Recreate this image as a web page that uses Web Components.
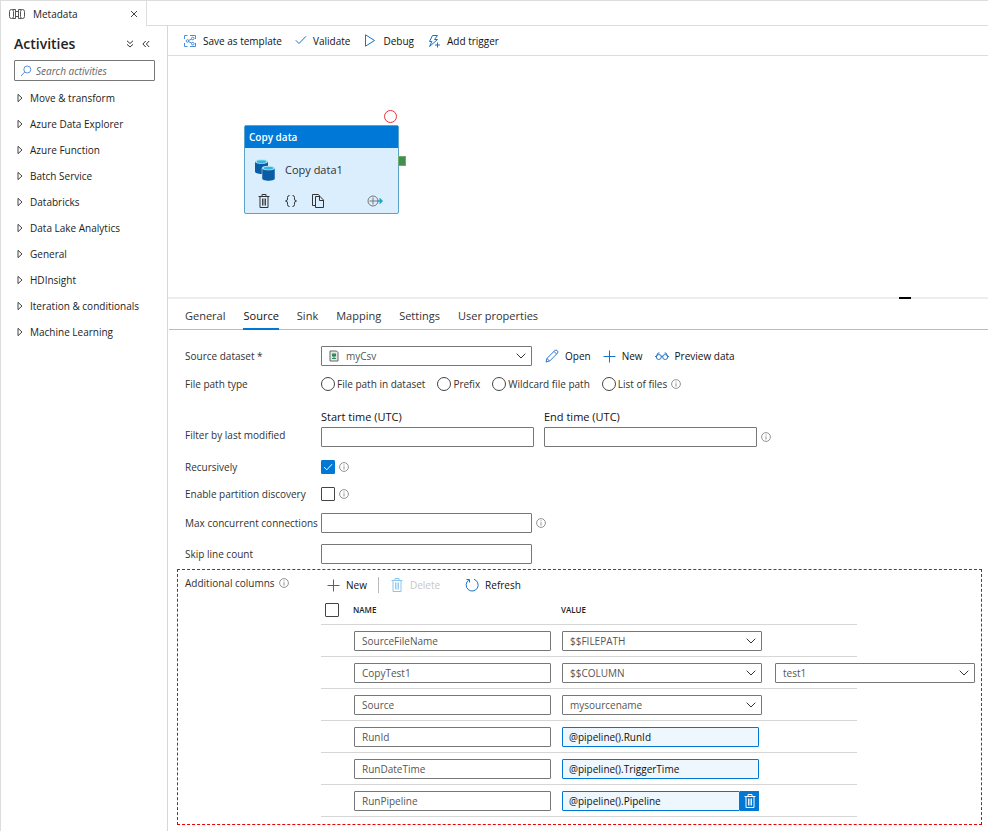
<!DOCTYPE html>
<html lang="en">
<head>
<meta charset="utf-8">
<title>Metadata</title>
<style>
  body {
    margin: 0;
    background: #fff;
    color: #323130;
    font: 10px/16px "Open Sans", "Noto Sans", sans-serif;
  }
</style>
</head>
<body>
<pipeline-studio>
  <editor-tab slot="tabs">Metadata</editor-tab>

  <activity-list slot="sidebar" heading="Activities">
    <activity-group>Move &amp; transform</activity-group>
    <activity-group>Azure Data Explorer</activity-group>
    <activity-group>Azure Function</activity-group>
    <activity-group>Batch Service</activity-group>
    <activity-group>Databricks</activity-group>
    <activity-group>Data Lake Analytics</activity-group>
    <activity-group>General</activity-group>
    <activity-group>HDInsight</activity-group>
    <activity-group>Iteration &amp; conditionals</activity-group>
    <activity-group>Machine Learning</activity-group>
  </activity-list>

  <command-bar>
    <tool-button icon="template">Save as template</tool-button>
    <tool-button icon="check">Validate</tool-button>
    <tool-button icon="play">Debug</tool-button>
    <tool-button icon="trigger">Add trigger</tool-button>
  </command-bar>
  <pipeline-canvas>
    <activity-node type="Copy data">Copy data1</activity-node>
  </pipeline-canvas>
  <panel-splitter></panel-splitter>
  <property-tabs></property-tabs>
  <source-form></source-form>
</pipeline-studio>

<script>
const ICONS = {
  pipeline: ['0 0 16 12', `<g fill="none" stroke="#555"><rect x=".5" y="1.5" width="4" height="9" rx="2"/><path d="M3.500 1.500h3v9h-3M9.500 1.500h3M9.500 10.500h3M9.500 1.500v9M6.500 3.500h3M6.500 8.500h3"/><rect x="11.500" y="1.500" width="4" height="9" rx="2"/></g>`],
  close: ['0 0 8 8', '<path d="M1 1l6 6M7 1L1 7" fill="none" stroke="#444"/>'],
  collapseAll: ['0 0 8 8', '<path d="M1 .8l3 2.700 3-2.700M1 4.300L4 7l3-2.700" fill="none" stroke="#333"/>'],
  hide: ['0 0 8 8', '<path d="M3.700 1L.9 4l2.800 3M7.200 1L4.400 4l2.800 3" fill="none" stroke="#333"/>'],
  search: ['0 0 12 12', '<g fill="none" stroke="#5b8fd6"><circle cx="7.300" cy="4.500" r="3.500"/><path d="M4.800 7L1 11"/></g>'],
  expand: ['0 0 6 10', '<path d="M1 1.300v7.400L5 5z" fill="none" stroke="#444"/>'],
  template: ['0 0 14 14', `<g fill="none" stroke="#4a8fdc"><path d="M1.500 5V1.500h3M1.500 9v3.500h3M7 1.500h5.500v3.500M12.500 9v3.500H7"/><circle cx="4.500" cy="7" r="1.300"/><circle cx="9.800" cy="4.500" r="1.300"/><circle cx="9.800" cy="9.700" r="1.300"/><path d="M5.700 6.400l3-1.400M5.700 7.600l3 1.500"/></g>`],
  check: ['0 0 12 12', '<path d="M.8 5.300l3.200 3.200 7-7.200" fill="none" stroke="#1473d0"/>'],
  play: ['0 0 14 14', '<path d="M2.500 .8v11.400L11.500 6.500z" fill="none" stroke="#1473d0"/>'],
  trigger: ['0 0 14 14', '<path d="M5.500 1.500h5L7.500 5.500h3L2.500 12.500l2.300-5H2.500zM10.500 8.500v5M8 11h5" fill="none" stroke="#1473d0"/>'],
  trash: ['0 0 14 16', '<g fill="none" stroke="currentColor"><path d="M1.500 3.500h11M5 3V1.500h4V3M3 3.500v11h8v-11"/><path d="M5.500 5.500v7M7 5.500v7M8.500 5.500v7" stroke-width=".9"/></g>'],
  braces: ['0 0 14 14', '<path d="M5.500 1.500Q3.500 1.500 3.500 3.500V5Q3.500 7 1.500 7 3.500 7 3.500 9v1.500q0 2 2 2M8.500 1.500q2 0 2 2V5q0 2 2 2-2 0-2 2v1.500q0 2-2 2" fill="none" stroke="#333"/>'],
  copy: ['0 0 14 16', '<g fill="none" stroke="#333"><path d="M4 12.500H1.500v-11h6L9 3.500"/><path d="M4.500 3.500h4.500l3.500 3.500v7.500h-8zM8.500 3.500V7.500h4"/></g>'],
  addOutput: ['0 0 18 12', '<g fill="none" stroke="#777"><circle cx="6" cy="6" r="5"/><path d="M6 2.500v7M2.500 6H10"/></g><path d="M10 6h5M12.500 3.500L15 6l-2.500 2.500" fill="none" stroke="#16a3cf" stroke-width="1.400"/>'],
  copyData: ['0 0 22 24', `<path d="M1 3.500v10C1 15 4 16 7.500 16S14 15 14 13.500v-10z" fill="#0b5ba5"/><ellipse cx="7.500" cy="3.500" rx="6.500" ry="2.300" fill="#b9e3f5"/><ellipse cx="7.500" cy="3.700" rx="4.800" ry="1.400" fill="#35b8dc"/><path d="M8 10v10.500c0 1.500 3 2.500 6.500 2.500S21 22 21 20.500V10z" fill="#0b5ba5" stroke="#dbeefe" stroke-width=".5"/><ellipse cx="14.500" cy="10" rx="6.500" ry="2.300" fill="#b9e3f5"/><ellipse cx="14.500" cy="10.200" rx="4.800" ry="1.400" fill="#35b8dc"/>`],
  dataset: ['0 0 10 12', '<path d="M1 1h6.500L9 2.500V11H1z" fill="#e3e9e6" stroke="#666"/><path d="M3 3.500h4v3H3z" fill="#2d8a5c"/><path d="M5 4v5M3 8.500h4" stroke="#2d8a5c"/>'],
  chevron: ['0 0 10 6', '<path d="M.7.7L5 5 9.300.7" fill="none" stroke="#333"/>'],
  pencil: ['0 0 14 14', '<path d="M1 13l1-3.700L10 1.400q1.200-.8 2.300.3t.3 2.300L4.700 12zM2 9.500L4.500 12M9 2.500L11.500 5" fill="none" stroke="#2b78d0"/>'],
  plus: ['0 0 13 13', '<path d="M6.500 .5v12M.5 6.500h12" fill="none" stroke="#1473d0"/>'],
  glasses: ['0 0 14 10', '<g fill="none" stroke="#2b78d0"><circle cx="3.800" cy="6" r="2.500"/><circle cx="10.200" cy="6" r="2.500"/><path d="M6 5.500q1-.8 2 0M1.300 5.500L3 2h1.500M12.700 5.500L11 2H9.500M0 5.500h1.500M12.500 5.500H14"/></g>'],
  info: ['0 0 10 10', '<g fill="none" stroke="#777" stroke-width=".8"><circle cx="5" cy="5" r="4.400"/><path d="M5 4.300v3.200M5 2.400v1"/></g>'],
  refresh: ['0 0 14 14', '<path d="M9 1.300a6 6 0 1 1-5.300.8M1.500 1.500h3v3" fill="none" stroke="#1473d0"/>'],
};

// small helper: every element here is a shadow root filled from one markup string
function define(name, render, setup) {
  customElements.define(name, class extends HTMLElement {
    connectedCallback() {
      if (this.shadowRoot) return;
      this.attachShadow({ mode: 'open' });
      this.shadowRoot.innerHTML = render(this);
      if (setup) setup(this, this.shadowRoot);
    }
  });
}

define('ui-icon', (el) => {
  const [box, body] = ICONS[el.getAttribute('name')];
  const [, , w, h] = box.split(' ');
  return `
    <style>
      :host { display: inline-flex; flex: none; }
      svg { display: block; }
    </style>
    <svg viewBox="${box}" width="${w}" height="${h}" aria-hidden="true">${body}</svg>`;
});

define('pipeline-studio', () => `
  <style>
    :host {
      display: flex;
      flex-direction: column;
      min-height: 100vh;
      box-sizing: border-box;
      border-top: 1px solid #ddd;
      border-left: 1px solid #ddd;
    }
    header { display: flex; }
    .rest { flex: 1; border-bottom: 1px solid #ddd; }
    .body { display: flex; flex: 1; }
    aside { width: 166px; flex: none; border-right: 1px solid #d6d6d6; }
    main { flex: 1; min-width: 0; display: flex; flex-direction: column; }
  </style>
  <header><slot name="tabs"></slot><div class="rest"></div></header>
  <div class="body">
    <aside><slot name="sidebar"></slot></aside>
    <main><slot></slot></main>
  </div>`);

define('editor-tab', () => `
  <style>
    :host {
      display: flex;
      align-items: center;
      box-sizing: border-box;
      width: 146px;
      height: 25px;
      padding: 0 8px;
      border-right: 1px solid #ddd;
      color: #222;
    }
    span { flex: 1; padding-left: 8px; }
    button { display: flex; padding: 0; border: 0; background: none; }
  </style>
  <ui-icon name="pipeline"></ui-icon>
  <span><slot></slot></span>
  <button aria-label="Close tab"><ui-icon name="close"></ui-icon></button>`);

define('activity-list', (el) => `
  <style>
    :host { display: block; padding: 8px 12px 0 13px; }
    header { display: flex; align-items: center; gap: 8px; height: 20px; }
    h2 { flex: 1; margin: 0; font-size: 14px; font-weight: 600; color: #222; }
    button { display: flex; padding: 0; border: 0; background: none; }
    header button:last-child { margin-right: 5px; }
    .search {
      display: flex;
      align-items: center;
      gap: 4px;
      height: 19px;
      margin: 6px 0 4px;
      padding: 0 5px;
      border: 1px solid #777;
      border-radius: 1px;
    }
    input {
      flex: 1;
      min-width: 0;
      padding: 0;
      border: 0;
      outline: 0;
      font: italic 10px/16px "Open Sans", "Noto Sans", sans-serif;
    }
    input::placeholder { color: #666; }
  </style>
  <header>
    <h2>${el.getAttribute('heading')}</h2>
    <button aria-label="Collapse all"><ui-icon name="collapseAll"></ui-icon></button>
    <button aria-label="Hide activities"><ui-icon name="hide"></ui-icon></button>
  </header>
  <div class="search">
    <ui-icon name="search"></ui-icon>
    <input type="search" placeholder="Search activities" aria-label="Search activities">
  </div>
  <slot></slot>`);

define('activity-group', () => `
  <style>
    :host { display: block; }
    button {
      display: flex;
      align-items: center;
      gap: 7px;
      width: 100%;
      height: 26px;
      padding: 0 0 0 3px;
      border: 0;
      background: none;
      color: #222;
      font: inherit;
      white-space: nowrap;
    }
  </style>
  <button><ui-icon name="expand"></ui-icon><span><slot></slot></span></button>`);

define('command-bar', () => `
  <style>
    :host {
      display: flex;
      align-items: center;
      gap: 13px;
      height: 29px;
      padding-left: 15px;
      border-bottom: 1px solid #ddd;
    }
  </style>
  <slot></slot>`);

define('tool-button', (el) => `
  <style>
    :host { display: inline-flex; }
    button {
      display: flex;
      align-items: center;
      gap: 6px;
      padding: 0;
      border: 0;
      background: none;
      color: #111;
      font: inherit;
      white-space: nowrap;
    }
    button:disabled { color: #c8c6c4; }
    button:disabled ui-icon { color: #8cc4ee; }
  </style>
  <button${el.hasAttribute('disabled') ? ' disabled' : ''}>
    <ui-icon name="${el.getAttribute('icon')}"></ui-icon><span><slot></slot></span>
  </button>`);

define('pipeline-canvas', () => `
  <style>
    :host { display: block; position: relative; height: 241px; }
    ::slotted(activity-node) { position: absolute; left: 76px; top: 69px; }
  </style>
  <slot></slot>`);

define('activity-node', (el) => `
  <style>
    :host {
      box-sizing: border-box;
      width: 155px;
      height: 89px;
      border: 1px solid #5ba3c9;
      border-radius: 2px;
      background: #dbeefe;
    }
    .type {
      height: 22px;
      padding-left: 4px;
      background: #0078d7;
      color: #fff;
      font-weight: 600;
      line-height: 22px;
    }
    .name {
      display: flex;
      align-items: center;
      gap: 9px;
      height: 44px;
      padding-left: 9px;
      font-size: 11px;
    }
    .tools { display: flex; align-items: center; gap: 13px; padding: 1px 13px 0 12px; color: #333; }
    button { display: flex; padding: 0; border: 0; background: none; color: inherit; }
    button:last-child { margin-left: auto; }
    .status {
      position: absolute;
      left: 139px;
      top: -16px;
      width: 11px;
      height: 11px;
      border: 1px solid #e8303c;
      border-radius: 50%;
    }
    .port {
      position: absolute;
      right: -8px;
      top: 30px;
      box-sizing: border-box;
      width: 8px;
      height: 10px;
      border: 1px solid #6cab70;
      background: #448e4c;
    }
  </style>
  <div class="type">${el.getAttribute('type')}</div>
  <div class="name"><ui-icon name="copyData"></ui-icon><slot></slot></div>
  <div class="tools">
    <button aria-label="Delete"><ui-icon name="trash"></ui-icon></button>
    <button aria-label="Code"><ui-icon name="braces"></ui-icon></button>
    <button aria-label="Clone"><ui-icon name="copy"></ui-icon></button>
    <button aria-label="Add output"><ui-icon name="addOutput"></ui-icon></button>
  </div>
  <div class="status"></div>
  <div class="port"></div>`);

define('panel-splitter', () => `
  <style>
    :host { display: flex; justify-content: flex-end; height: 2px; background: #ededed; }
    div { width: 12px; margin-right: 77px; background: #000; }
  </style>
  <div></div>`);

define('property-tabs', () => `
  <style>
    :host { display: block; padding-left: 1px; }
    nav {
      display: flex;
      gap: 18px;
      height: 30px;
      padding-left: 16px;
      border-bottom: 1px solid #bbb;
    }
    button {
      height: 31px;
      padding: 5px 0 0;
      border: 0;
      border-bottom: 2px solid transparent;
      background: none;
      color: #333;
      font: 11px/16px "Open Sans", "Noto Sans", sans-serif;
    }
    button[aria-selected=true] { border-color: #0078d4; color: #111; }
  </style>
  <nav role="tablist">
    <button role="tab">General</button>
    <button role="tab" aria-selected="true">Source</button>
    <button role="tab">Sink</button>
    <button role="tab">Mapping</button>
    <button role="tab">Settings</button>
    <button role="tab">User properties</button>
  </nav>`, (el, root) => {
  const tabs = root.querySelectorAll('button');
  tabs.forEach((tab) => tab.addEventListener('click', () => {
    tabs.forEach((t) => t.setAttribute('aria-selected', t === tab));
  }));
});

define('form-row', () => `
  <style>
    :host {
      display: grid;
      grid-template-columns: 136px 1fr;
      align-items: center;
      height: 28px;
      padding-left: 8px;
      white-space: nowrap;
    }
    :host([size=compact]) { height: 26px; }
    :host([size=wide]) { height: 31px; }
    :host([size=tall]) { height: 49px; align-items: end; padding-bottom: 6px; }
    :host([size=tall]) ::slotted([slot=label]) { padding-bottom: 4px; }
    .controls { display: flex; align-items: center; gap: 4px; }
  </style>
  <slot name="label"></slot>
  <div class="controls"><slot></slot></div>`);

const COLUMNS = [
  { name: 'SourceFileName', select: ['$$FILEPATH'] },
  { name: 'CopyTest1', select: ['$$COLUMN', 'test1'] },
  { name: 'Source', select: ['mysourcename'] },
  { name: 'RunId', expression: '@pipeline().RunId' },
  { name: 'RunDateTime', expression: '@pipeline().TriggerTime' },
  { name: 'RunPipeline', expression: '@pipeline().Pipeline', removable: true },
];

const selectBox = (value, label) => `
  <div class="select">
    <select aria-label="${label}"><option>${value}</option></select>
    <ui-icon name="chevron"></ui-icon>
  </div>`;

const columnRow = (col) => `
  <tr>
    <td></td>
    <td><input type="text" value="${col.name}" aria-label="Name"></td>
    <td><div class="value">${col.select
      ? col.select.map((v) => selectBox(v, 'Value')).join('')
      : `<div class="expression">
           <input type="text" value="${col.expression}" aria-label="Value">
           ${col.removable ? '<button aria-label="Remove"><ui-icon name="trash"></ui-icon></button>' : ''}
         </div>`}</div></td>
  </tr>`;

define('source-form', () => `
  <style>
    :host { display: block; padding: 12px 6px 6px 9px; }
    input[type=text], select {
      box-sizing: border-box;
      height: 20px;
      margin: 0;
      padding: 0 7px;
      border: 1px solid #777;
      border-radius: 1px;
      outline: 0;
      background: #fff;
      color: #555;
      font: inherit;
      appearance: none;
    }
    input.field { width: 211px; }
    input[type=checkbox], input[type=radio] {
      flex: none;
      box-sizing: border-box;
      width: 14px;
      height: 14px;
      margin: 0;
      border: 1px solid #444;
      border-radius: 1px;
      background: #fff;
      vertical-align: middle;
      appearance: none;
    }
    input[type=radio] { border-radius: 50%; }
    .check { display: grid; place-items: center; }
    .check > *, .select > * { grid-area: 1 / 1; }
    .check input:checked { border-color: #0078d4; background: #0078d4; }
    .check svg { display: none; pointer-events: none; }
    .check input:checked + svg { display: block; }
    .select { display: grid; align-items: center; width: 200px; flex: none; }
    .select select { width: 100%; }
    .select ui-icon { justify-self: end; margin-right: 6px; pointer-events: none; }
    .dataset { width: 211px; margin-right: 9px; }
    .dataset select { padding-left: 24px; }
    .dataset ui-icon:last-child { justify-self: start; margin-left: 8px; }
    .commands { display: flex; gap: 12px; }
    .option { display: flex; align-items: center; gap: 2px; margin-right: 8px; }
    .option:last-of-type { margin: 0; }
    .time { display: grid; gap: 2px; width: 213px; margin-right: 6px; color: #111; font-size: 11px; }
    .time:last-of-type { margin: 0; }
    .time + ui-icon { align-self: end; margin-bottom: 5px; }
    section {
      display: grid;
      grid-template-columns: 136px 1fr;
      padding: 5px 0 7px 7px;
      border: 1px dashed #e00;
    }
    h3 { display: flex; gap: 4px; margin: 0; font: inherit; }
    h3 ui-icon { height: 16px; align-items: center; }
    .bar { display: flex; align-items: center; gap: 11px; height: 20px; padding-left: 6px; }
    .bar hr { width: 1px; height: 16px; margin: 0; border: 0; background: #bbb; }
    .bar tool-button:last-child { margin-left: 14px; }
    table { width: 536px; table-layout: fixed; border-collapse: collapse; }
    th, td { height: 31px; padding: 0; border-bottom: 1px solid #d6d6d6; text-align: left; }
    thead th { height: 29px; color: #222; font-size: 8px; font-weight: 600; }
    th:first-child { width: 32px; padding-left: 4px; box-sizing: border-box; }
    th:nth-child(2) { width: 208px; }
    td input[type=text] { width: 197px; margin-left: 1px; }
    tbody tr td:first-child { width: 32px; }
    .value { display: flex; gap: 13px; padding-left: 1px; }
    .expression { display: flex; width: 197px; flex: none; }
    .value .expression input { flex: 1; min-width: 0; margin: 0; padding: 0 6px; border-color: #0078d4; background: #eef6fe; color: #111; }
    .expression button {
      display: flex;
      align-items: center;
      justify-content: center;
      width: 19px;
      height: 20px;
      padding: 0;
      border: 0;
      background: #0078d4;
      color: #fff;
    }
  </style>

  <form-row>
    <label slot="label" for="dataset">Source dataset *</label>
    <div class="select dataset">
      <select id="dataset"><option>myCsv</option></select>
      <ui-icon name="chevron"></ui-icon>
      <ui-icon name="dataset"></ui-icon>
    </div>
    <div class="commands">
      <tool-button icon="pencil">Open</tool-button>
      <tool-button icon="plus">New</tool-button>
      <tool-button icon="glasses">Preview data</tool-button>
    </div>
  </form-row>

  <form-row role="radiogroup" aria-label="File path type">
    <span slot="label">File path type</span>
    <label class="option"><input type="radio" name="path">File path in dataset</label>
    <label class="option"><input type="radio" name="path">Prefix</label>
    <label class="option"><input type="radio" name="path">Wildcard file path</label>
    <label class="option"><input type="radio" name="path">List of files</label>
    <ui-icon name="info"></ui-icon>
  </form-row>

  <form-row size="tall">
    <span slot="label">Filter by last modified</span>
    <label class="time">Start time (UTC)<input type="text"></label>
    <label class="time">End time (UTC)<input type="text"></label>
    <ui-icon name="info"></ui-icon>
  </form-row>

  <form-row>
    <label slot="label" for="recursive">Recursively</label>
    <div class="check">
      <input type="checkbox" id="recursive" checked>
      <svg width="10" height="10" viewBox="0 0 10 10"><path d="M1 5l2.800 2.800L9 2.200" fill="none" stroke="#fff"/></svg>
    </div>
    <ui-icon name="info"></ui-icon>
  </form-row>

  <form-row size="compact">
    <label slot="label" for="partition">Enable partition discovery</label>
    <input type="checkbox" id="partition">
    <ui-icon name="info"></ui-icon>
  </form-row>

  <form-row size="wide">
    <label slot="label" for="connections">Max concurrent connections</label>
    <input class="field" type="text" id="connections">
    <ui-icon name="info"></ui-icon>
  </form-row>

  <form-row size="wide">
    <label slot="label" for="skip">Skip line count</label>
    <input class="field" type="text" id="skip">
  </form-row>

  <section>
    <h3>Additional columns <ui-icon name="info"></ui-icon></h3>
    <div>
      <div class="bar">
        <tool-button icon="plus">New</tool-button>
        <hr>
        <tool-button icon="trash" disabled>Delete</tool-button>
        <tool-button icon="refresh">Refresh</tool-button>
      </div>
      <table>
        <thead>
          <tr>
            <th><input type="checkbox" aria-label="Select all"></th>
            <th>NAME</th>
            <th>VALUE</th>
          </tr>
        </thead>
        <tbody>${COLUMNS.map(columnRow).join('')}</tbody>
      </table>
    </div>
  </section>`);
</script>
</body>
</html>
